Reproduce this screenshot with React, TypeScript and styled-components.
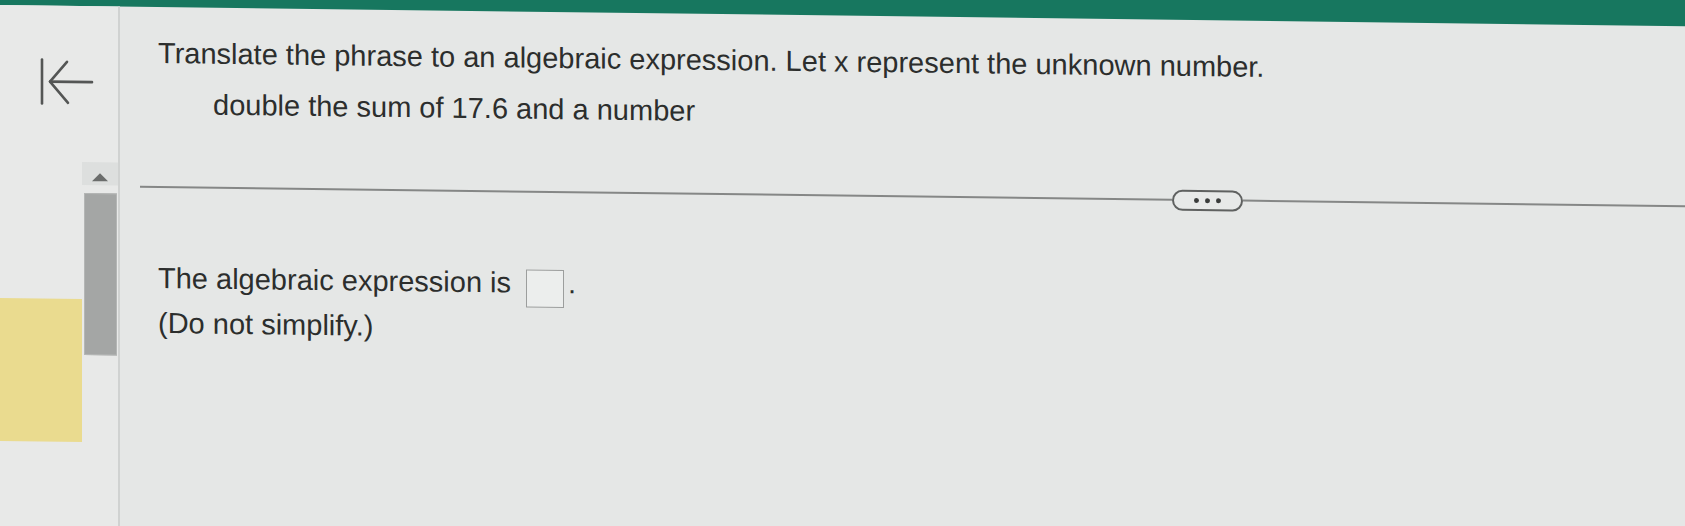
import React from "react";
import styled, { createGlobalStyle } from "styled-components";

const Global = createGlobalStyle`
  html, body {
    margin: 0;
    padding: 0;
    overflow: hidden;
    background: #17775f;
  }
  #root { width: 1685px; }
`;

const Page = styled.div`
  width: 1700px;
  height: 610px;
  margin-top: -30px;
  display: flex;
  flex-direction: column;
  background: #e5e7e6;
  transform: skewY(0.72deg);
  transform-origin: 0 30px;
  font-family: "Liberation Sans", Arial, Helvetica, sans-serif;
  color: #2c2e2d;
`;

const TopBar = styled.div`
  height: 35px;
  flex: 0 0 35px;
  background: #17775f;
`;

const Main = styled.div`
  flex: 1;
  display: flex;
`;

const Sidebar = styled.aside`
  flex: 0 0 118px;
  display: grid;
  grid-template-columns: 82px 36px;
  grid-template-rows: auto 1fr;
  border-right: 2px solid #d0d2d1;
  background: #e8e9e8;
`;

const BackButton = styled.button`
  grid-column: 1 / span 2;
  justify-self: start;
  border: 0;
  background: transparent;
  padding: 51px 0 0 38px;
  margin: 0;
  line-height: 0;
  cursor: pointer;
`;

const YellowTab = styled.div`
  margin-top: 192px;
  height: 143px;
  background: #eadb8f;
`;

const ScrollColumn = styled.div`
  display: flex;
  flex-direction: column;
  padding-top: 55px;
`;

const ScrollUp = styled.div`
  height: 23px;
  background: #dddfde;
  display: flex;
  align-items: flex-end;
  justify-content: center;
  padding-bottom: 4px;
  box-sizing: border-box;
`;

const Triangle = styled.div`
  width: 0;
  height: 0;
  border-left: 8px solid transparent;
  border-right: 8px solid transparent;
  border-bottom: 8px solid #6b6d6c;
`;

const Thumb = styled.div`
  margin: 8px 1px 0 2px;
  height: 160px;
  background: #a4a6a5;
  border: 1px solid #b4b6b5;
`;

const Content = styled.section`
  flex: 1;
  display: flex;
  flex-direction: column;
  padding-top: 29px;
`;

const Line = styled.div<{ $indent?: number; $lh?: number; $mt?: number }>`
  font-size: 29px;
  line-height: ${(p) => p.$lh ?? 34}px;
  margin-top: ${(p) => p.$mt ?? 0}px;
  padding-left: ${(p) => 38 + (p.$indent ?? 0)}px;
  white-space: nowrap;
`;

const RuleRow = styled.div`
  margin: 55px 0 0 20px;
  height: 22px;
  display: flex;
  align-items: center;
`;

const RuleSegment = styled.div<{ $w?: number }>`
  ${(p) => (p.$w ? `flex: 0 0 ${p.$w}px;` : `flex: 1;`)}
  height: 2px;
  background: #858786;
`;

const MorePill = styled.button`
  flex: 0 0 71px;
  height: 21px;
  box-sizing: border-box;
  border: 2px solid #5f6160;
  border-radius: 11px;
  background: #e7e9e8;
  display: flex;
  align-items: center;
  justify-content: center;
  gap: 6px;
  padding: 0;
`;

const Dot = styled.span`
  width: 5px;
  height: 5px;
  border-radius: 50%;
  background: #3a3c3b;
`;

const AnswerBox = styled.span`
  display: inline-block;
  width: 38px;
  height: 38px;
  box-sizing: border-box;
  border: 1.5px solid #9c9e9d;
  background: #eceeed;
  vertical-align: -15px;
  margin-left: 15px;
`;

const Period = styled.span`
  margin-left: 4px;
`;

export default function App() {
  return (
    <>
      <Global />
      <Page>
        <TopBar />
        <Main>
          <Sidebar>
            <BackButton aria-label="Back">
              <svg width="58" height="50" viewBox="0 0 58 50" fill="none">
                <g stroke="#545655" strokeWidth="2.6" strokeLinecap="round" strokeLinejoin="round">
                  <line x1="4" y1="3" x2="4" y2="47" />
                  <line x1="12" y1="25" x2="54" y2="25" />
                  <polyline points="29,5 12,25 30,46" />
                </g>
              </svg>
            </BackButton>
            <YellowTab />
            <ScrollColumn>
              <ScrollUp>
                <Triangle />
              </ScrollUp>
              <Thumb />
            </ScrollColumn>
          </Sidebar>
          <Content>
            <Line>
              Translate the phrase to an algebraic expression. Let x represent the unknown number.
            </Line>
            <Line $indent={55} $mt={17}>
              double the sum of 17.6 and a number
            </Line>
            <RuleRow>
              <RuleSegment $w={1032} />
              <MorePill aria-label="More">
                <Dot />
                <Dot />
                <Dot />
              </MorePill>
              <RuleSegment />
            </RuleRow>
            <Line $lh={41} $mt={60}>
              The algebraic expression is
              <AnswerBox />
              <Period>.</Period>
            </Line>
            <Line $lh={41}>(Do not simplify.)</Line>
          </Content>
        </Main>
      </Page>
    </>
  );
}
